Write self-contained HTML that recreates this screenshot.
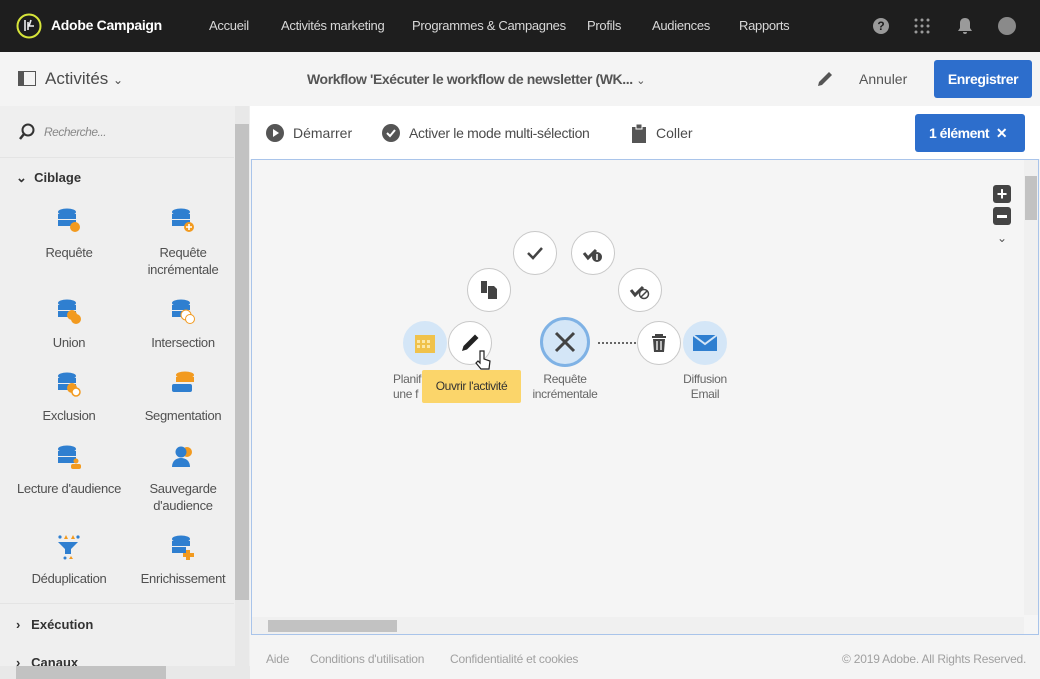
<!DOCTYPE html>
<html><head><meta charset="utf-8"><style>
*{margin:0;padding:0;box-sizing:border-box}
body{width:1040px;height:679px;overflow:hidden;background:#f4f4f4;font-family:"Liberation Sans",sans-serif;position:relative;color:#4b4b4b}
.abs{position:absolute}
.top{left:0;top:0;width:1040px;height:52px;background:#1e1e1e}
.nav{color:#d8d8d8;font-size:13px;top:18px;letter-spacing:-.3px}
.bar2{left:0;top:52px;width:1040px;height:54px;background:#f4f4f4}
.side{left:0;top:106px;width:250px;height:573px;background:#efefef}
.tb{left:250px;top:106px;width:790px;height:53px;background:#fff}
.canvas{left:251px;top:159px;width:788px;height:476px;background:#f5f5f5;border:1px solid #a9c4ea}
.lbl{font-size:13px;color:#505050;text-align:center;width:120px;line-height:17px;letter-spacing:-.3px}
.nl{font-size:12px;color:#666;text-align:center;width:120px;line-height:15px;letter-spacing:-.3px}
.circ{border-radius:50%;background:#fff;border:1px solid #c8c8c8;width:44px;height:44px;display:flex;align-items:center;justify-content:center}
.foot{font-size:12px;color:#a0a0a0;top:652px;letter-spacing:-.2px}
</style></head><body>
<div class="abs top"></div>
<svg class="abs" style="left:16px;top:13px" width="26" height="26"><circle cx="13" cy="13" r="11.5" fill="none" stroke="#d7e53a" stroke-width="2"/><path d="M9 7v11M12 9v8M15 7l-2 6h5" stroke="#eee" stroke-width="1.6" fill="none"/></svg>
<div class="abs" style="left:51px;top:17px;color:#fff;font-weight:bold;font-size:14px;letter-spacing:-.3px">Adobe Campaign</div>
<div class="abs nav" style="left:209px">Accueil</div>
<div class="abs nav" style="left:281px">Activités marketing</div>
<div class="abs nav" style="left:412px">Programmes &amp; Campagnes</div>
<div class="abs nav" style="left:587px">Profils</div>
<div class="abs nav" style="left:652px">Audiences</div>
<div class="abs nav" style="left:739px">Rapports</div>
<div class="abs" style="left:873px;top:18px;width:16px;height:16px;border-radius:50%;background:#9a9a9a;color:#1e1e1e;font-size:12px;font-weight:bold;text-align:center;line-height:16px">?</div>
<svg class="abs" style="left:914px;top:18px" width="16" height="16" fill="#9a9a9a"><circle cx="2" cy="2" r="1.5"/><circle cx="8" cy="2" r="1.5"/><circle cx="14" cy="2" r="1.5"/><circle cx="2" cy="8" r="1.5"/><circle cx="8" cy="8" r="1.5"/><circle cx="14" cy="8" r="1.5"/><circle cx="2" cy="14" r="1.5"/><circle cx="8" cy="14" r="1.5"/><circle cx="14" cy="14" r="1.5"/></svg>
<svg class="abs" style="left:957px;top:17px" width="16" height="18" fill="#9a9a9a"><path d="M8 1c-3 0-5 2-5 5v5l-2 3h14l-2-3V6c0-3-2-5-5-5zM6 15h4a2 2 0 0 1-4 0z"/></svg>
<div class="abs" style="left:998px;top:17px;width:18px;height:18px;border-radius:50%;background:#8a8a8a"></div>

<div class="abs bar2"></div>
<svg class="abs" style="left:18px;top:71px" width="18" height="15"><rect x=".5" y=".5" width="17" height="14" fill="none" stroke="#555"/><rect x="1" y="1" width="5" height="13" fill="#555"/></svg>
<div class="abs" style="left:45px;top:69px;font-size:17px;color:#4b4b4b">Activités <span style="font-size:12px">⌄</span></div>
<div class="abs" style="left:307px;top:71px;font-size:14px;font-weight:bold;color:#555;letter-spacing:-.4px">Workflow 'Exécuter le workflow de newsletter (WK... <span style="font-weight:normal;font-size:11px">⌄</span></div>
<svg class="abs" style="left:815px;top:69px" width="20" height="20"><path d="M3 17l1-4 10-10 3 3-10 10z" fill="#555"/></svg>
<div class="abs" style="left:859px;top:71px;font-size:14px;color:#555">Annuler</div>
<div class="abs" style="left:934px;top:60px;width:98px;height:38px;background:#2d6ecc;border-radius:3px;color:#fff;font-weight:bold;font-size:14px;text-align:center;line-height:38px;letter-spacing:-.4px">Enregistrer</div>

<div class="abs side"></div>
<svg class="abs" style="left:18px;top:123px" width="18" height="18"><circle cx="10" cy="7" r="5.5" fill="none" stroke="#333" stroke-width="2"/><path d="M6 11l-4 5" stroke="#333" stroke-width="2.5"/></svg>
<div class="abs" style="left:44px;top:125px;font-size:12px;font-style:italic;color:#888;letter-spacing:-.5px">Recherche...</div>
<div class="abs" style="left:0;top:157px;width:234px;height:1px;background:#e4e4e4"></div>
<div class="abs" style="left:16px;top:170px;font-size:13px;font-weight:bold;color:#333">⌄&nbsp; Ciblage</div>
<div class="abs" style="left:235px;top:106px;width:14px;height:560px;background:#e8e8e8"></div>
<div class="abs" style="left:235px;top:124px;width:14px;height:476px;background:#c2c2c2"></div>
<div class="abs" style="left:0;top:666px;width:250px;height:13px;background:#e8e8e8"></div>
<div class="abs" style="left:16px;top:666px;width:150px;height:13px;background:#c2c2c2"></div>

<svg class="abs" style="left:56px;top:207px" width="26" height="26"><ellipse cx="11" cy="5" rx="9" ry="3.5" fill="#2f7fd0"/><rect x="2" y="7" width="18" height="5" fill="#2f7fd0"/><rect x="2" y="13" width="18" height="6" fill="#2f7fd0"/><circle cx="19" cy="20" r="5" fill="#f29a1f"/></svg>
<svg class="abs" style="left:170px;top:207px" width="26" height="26"><ellipse cx="11" cy="5" rx="9" ry="3.5" fill="#2f7fd0"/><rect x="2" y="7" width="18" height="5" fill="#2f7fd0"/><rect x="2" y="13" width="18" height="6" fill="#2f7fd0"/><circle cx="19" cy="20" r="5" fill="#f29a1f"/><path d="M19 17v6M16 20h6" stroke="#fff" stroke-width="1.6"/></svg>
<svg class="abs" style="left:56px;top:298px" width="26" height="26"><ellipse cx="11" cy="5" rx="9" ry="3.5" fill="#2f7fd0"/><rect x="2" y="7" width="18" height="5" fill="#2f7fd0"/><rect x="2" y="13" width="18" height="6" fill="#2f7fd0"/><circle cx="16" cy="17" r="5" fill="#f29a1f"/><circle cx="20" cy="21" r="5" fill="#f29a1f"/></svg>
<svg class="abs" style="left:170px;top:298px" width="26" height="26"><ellipse cx="11" cy="5" rx="9" ry="3.5" fill="#2f7fd0"/><rect x="2" y="7" width="18" height="5" fill="#2f7fd0"/><rect x="2" y="13" width="18" height="6" fill="#2f7fd0"/><circle cx="16" cy="17" r="5" fill="#fff" stroke="#f29a1f"/><circle cx="20" cy="21" r="4.5" fill="#fff" stroke="#f29a1f"/></svg>
<svg class="abs" style="left:56px;top:371px" width="26" height="26"><ellipse cx="11" cy="5" rx="9" ry="3.5" fill="#2f7fd0"/><rect x="2" y="7" width="18" height="5" fill="#2f7fd0"/><rect x="2" y="13" width="18" height="6" fill="#2f7fd0"/><circle cx="16" cy="17" r="5" fill="#f29a1f"/><circle cx="20" cy="21" r="4" fill="#fff" stroke="#f29a1f" stroke-width="1.5"/></svg>
<svg class="abs" style="left:170px;top:371px" width="26" height="26"><ellipse cx="15" cy="4" rx="9" ry="3.5" fill="#f29a1f"/><rect x="6" y="6" width="18" height="5" fill="#f29a1f"/><rect x="2" y="13" width="20" height="8" rx="2" fill="#2f7fd0"/></svg>
<svg class="abs" style="left:56px;top:444px" width="26" height="26"><ellipse cx="11" cy="5" rx="9" ry="3.5" fill="#2f7fd0"/><rect x="2" y="7" width="18" height="5" fill="#2f7fd0"/><rect x="2" y="13" width="18" height="6" fill="#2f7fd0"/><circle cx="20" cy="17" r="2.5" fill="#f29a1f"/><rect x="15" y="20" width="10" height="5" rx="2" fill="#f29a1f"/></svg>
<svg class="abs" style="left:170px;top:444px" width="26" height="26"><circle cx="17" cy="8" r="5" fill="#f29a1f"/><circle cx="11" cy="8" r="5.5" fill="#2f7fd0"/><path d="M2 23c0-6 4-9 9-9s9 3 9 9z" fill="#2f7fd0"/></svg>
<svg class="abs" style="left:56px;top:534px" width="26" height="26"><circle cx="4" cy="3" r="1.6" fill="#2f7fd0"/><path d="M8 5l2-4 2 4zM15 5l2-4 2 4z" fill="#f29a1f"/><circle cx="22" cy="3" r="1.6" fill="#2f7fd0"/><path d="M2 8h20l-7 7v5h-6v-5z" fill="#2f7fd0"/><circle cx="9" cy="24" r="1.5" fill="#2f7fd0"/><path d="M13 25l2-3 2 3z" fill="#f29a1f"/></svg>
<svg class="abs" style="left:170px;top:534px" width="26" height="26"><ellipse cx="11" cy="5" rx="9" ry="3.5" fill="#2f7fd0"/><rect x="2" y="7" width="18" height="5" fill="#2f7fd0"/><rect x="2" y="13" width="14" height="6" fill="#2f7fd0"/><path d="M16 16h4v3h4v4h-4v3h-4v-3h-3v-4h3z" fill="#f29a1f"/></svg>

<div class="abs lbl" style="left:9px;top:244px">Requête</div>
<div class="abs lbl" style="left:123px;top:244px">Requête<br>incrémentale</div>
<div class="abs lbl" style="left:9px;top:334px">Union</div>
<div class="abs lbl" style="left:123px;top:334px">Intersection</div>
<div class="abs lbl" style="left:9px;top:407px">Exclusion</div>
<div class="abs lbl" style="left:123px;top:407px">Segmentation</div>
<div class="abs lbl" style="left:9px;top:480px">Lecture d'audience</div>
<div class="abs lbl" style="left:123px;top:480px">Sauvegarde<br>d'audience</div>
<div class="abs lbl" style="left:9px;top:570px">Déduplication</div>
<div class="abs lbl" style="left:123px;top:570px">Enrichissement</div>
<div class="abs" style="left:0;top:603px;width:234px;height:1px;background:#e4e4e4"></div>
<div class="abs" style="left:16px;top:617px;font-size:13px;font-weight:bold;color:#333">›&nbsp;&nbsp; Exécution</div>
<div class="abs" style="left:16px;top:655px;font-size:13px;font-weight:bold;color:#333;height:11px;overflow:hidden">›&nbsp;&nbsp; Canaux</div>

<div class="abs tb"></div>
<div class="abs" style="left:266px;top:124px;width:18px;height:18px;border-radius:50%;background:#555"></div>
<svg class="abs" style="left:266px;top:124px" width="18" height="18"><path d="M7 5l6 4-6 4z" fill="#fff"/></svg>
<div class="abs" style="left:293px;top:125px;font-size:14px;color:#4b4b4b">Démarrer</div>
<div class="abs" style="left:382px;top:124px;width:18px;height:18px;border-radius:50%;background:#555"></div>
<svg class="abs" style="left:382px;top:124px" width="18" height="18"><path d="M5 9l3 3 5-6" stroke="#fff" stroke-width="2" fill="none"/></svg>
<div class="abs" style="left:409px;top:125px;font-size:14px;color:#4b4b4b;letter-spacing:-.3px">Activer le mode multi-sélection</div>
<svg class="abs" style="left:631px;top:123px" width="16" height="20"><rect x="1" y="4" width="14" height="16" fill="#555"/><rect x="5" y="1" width="6" height="5" fill="#555" stroke="#fff"/></svg>
<div class="abs" style="left:656px;top:125px;font-size:14px;color:#4b4b4b">Coller</div>
<div class="abs" style="left:915px;top:114px;width:110px;height:38px;background:#2d6ecc;border-radius:3px;color:#fff;font-weight:bold;font-size:14px;line-height:38px;padding-left:14px;letter-spacing:-.5px">1 élément&nbsp; ✕</div>

<div class="abs canvas"></div>
<div class="abs" style="left:993px;top:185px;width:18px;height:18px;background:#444;border-radius:3px;color:#fff;font-weight:bold;font-size:18px;line-height:18px;text-align:center">+</div>
<div class="abs" style="left:993px;top:207px;width:18px;height:18px;background:#444;border-radius:3px"></div>
<div class="abs" style="left:997px;top:215px;width:10px;height:3px;background:#fff"></div>
<div class="abs" style="left:997px;top:231px;font-size:12px;color:#555">⌄</div>
<div class="abs" style="left:1024px;top:160px;width:14px;height:455px;background:#f0f0f0"></div>
<div class="abs" style="left:1025px;top:176px;width:12px;height:44px;background:#c2c2c2"></div>
<div class="abs" style="left:252px;top:617px;width:772px;height:17px;background:#f0f0f0"></div>
<div class="abs" style="left:268px;top:620px;width:129px;height:12px;background:#c2c2c2"></div>

<div class="abs nl" style="left:393px;top:372px;text-align:left">Planif<br>une f</div>
<div class="abs nl" style="left:505px;top:372px">Requête<br>incrémentale</div>
<div class="abs nl" style="left:645px;top:372px">Diffusion<br>Email</div>

<div class="abs" style="left:598px;top:342px;width:42px;border-top:2px dotted #666"></div>
<div class="abs circ" style="left:403px;top:321px;background:#d4e6f7;border-color:#d4e6f7"><svg width="24" height="22"><rect x="2" y="3" width="20" height="18" fill="#f0c24b"/><g fill="#fbe7a7"><rect x="4" y="8" width="3" height="3"/><rect x="9" y="8" width="3" height="3"/><rect x="14" y="8" width="3" height="3"/><rect x="4" y="13" width="3" height="3"/><rect x="9" y="13" width="3" height="3"/><rect x="14" y="13" width="3" height="3"/></g></svg></div>
<div class="abs circ" style="left:448px;top:321px"><svg width="22" height="22"><path d="M3 19l1.5-5L16 2.5l3.5 3.5L8 17.5z" fill="#222"/></svg></div>
<div class="abs circ" style="left:467px;top:268px"><svg width="22" height="22"><rect x="3" y="2" width="6" height="12" fill="#444"/><path d="M10 7h6l3 3v10h-9z" fill="#444"/></svg></div>
<div class="abs circ" style="left:513px;top:231px"><svg width="22" height="22"><path d="M4 11l5 5 9-10" stroke="#444" stroke-width="2.5" fill="none"/></svg></div>
<div class="abs circ" style="left:571px;top:231px"><svg width="24" height="22"><path d="M3 11l4 5 8-8" stroke="#444" stroke-width="3" fill="none"/><circle cx="16" cy="15" r="5" fill="#444"/><path d="M16 12v6" stroke="#fff" stroke-width="1.5"/></svg></div>
<div class="abs circ" style="left:618px;top:268px"><svg width="24" height="22"><path d="M3 11l4 5 8-8" stroke="#444" stroke-width="3" fill="none"/><circle cx="16" cy="15" r="4.5" fill="#fff" stroke="#444" stroke-width="1.5"/><path d="M13 18l6-6" stroke="#444" stroke-width="1.5"/></svg></div>
<div class="abs" style="left:540px;top:317px;width:50px;height:50px;border-radius:50%;background:#d4e6f7;border:3px solid #7fb2e5"></div>
<svg class="abs" style="left:553px;top:330px" width="24" height="24"><path d="M3 3l18 18M21 3L3 21" stroke="#444" stroke-width="3"/></svg>
<div class="abs circ" style="left:637px;top:321px"><svg width="22" height="22"><path d="M4 5h14M8 5V3h6v2" stroke="#444" stroke-width="2" fill="none"/><path d="M5 7h12l-1 13H6z" fill="#444"/><path d="M9 9v9M13 9v9" stroke="#fff" stroke-width="1.3"/></svg></div>
<div class="abs circ" style="left:683px;top:321px;background:#d4e6f7;border-color:#d4e6f7"><svg width="26" height="20"><rect x="1" y="2" width="24" height="16" fill="#2f7fd0"/><path d="M1 2l12 9 12-9" stroke="#d4e6f7" stroke-width="2" fill="none"/></svg></div>

<div class="abs" style="left:422px;top:370px;width:99px;height:33px;background:#fbd56a;border-radius:2px;font-size:12px;color:#333;line-height:33px;text-align:center;letter-spacing:-.4px">Ouvrir l'activité</div>
<svg class="abs" style="left:475px;top:349px" width="16" height="22"><path d="M5 2v12l-2-2-2 2 5 6h8l1-8-6-2V2z" fill="#fff" stroke="#222" stroke-width="1.2"/></svg>

<div class="abs foot" style="left:266px">Aide</div>
<div class="abs foot" style="left:310px">Conditions d'utilisation</div>
<div class="abs foot" style="left:450px">Confidentialité et cookies</div>
<div class="abs foot" style="left:842px">© 2019 Adobe. All Rights Reserved.</div>
</body></html>
